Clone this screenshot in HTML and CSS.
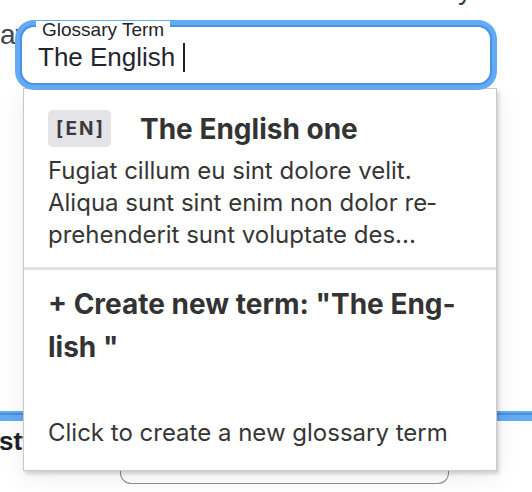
FILE: index.html
```html
<!DOCTYPE html>
<html lang="en">
<head>
<meta charset="utf-8">
<title>Glossary Term</title>
<link rel="stylesheet" href="styles.css">
</head>
<body>
<div class="page">
  <p class="bg-title">Glossary</p>
  <p class="bg-label">ay</p>
  <div class="bg-section"></div>
  <div class="bg-band"></div>
  <p class="bg-strong">stf</p>
  <div class="bg-box"></div>
</div>

<div class="combo">
  <div class="field"><span class="field-label">Glossary Term</span><span class="field-value">The English </span><span class="caret"></span></div>
  <div class="dropdown">
    <div class="option">
      <div class="option-head">
        <span class="badge">[EN]</span>
        <span class="option-title">The English one</span>
      </div>
      <p class="option-desc">Fugiat cillum eu sint dolore velit. Aliqua sunt sint enim non dolor re&shy;prehenderit sunt voluptate des...</p>
    </div>
    <div class="option option-create">
      <p class="create-title">+ Create new term: "The Eng&shy;lish "</p>
      <p class="create-hint">Click to create a new glossary term</p>
    </div>
  </div>
</div>
</body>
</html>
```
FILE: styles.css
```css
html, body {
  margin: 0;
  padding: 0;
  background: #ffffff;
  overflow: hidden;
}

body {
  width: 532px;
  height: 492px;
  position: relative;
  font-family: "Liberation Sans", Arial, sans-serif;
}

/* background page, mostly hidden under the popup */
.page {
  display: flex;
  flex-direction: column;
}

.bg-title {
  margin: -26px 0 0 0;
  padding-right: 60px;
  text-align: right;
  font-size: 28px;
  line-height: 32px;
  color: #3a3b44;
}

.bg-label {
  margin: 13px 0 0 0;
  font-size: 28px;
  line-height: 32px;
  color: #44464f;
}

.bg-section {
  height: 360px;
}

.bg-band {
  height: 2px;
  background: #4b8fdb;
  border-top: 2px solid #64aaf5;
  border-bottom: 6px solid #64aaf5;
}

.bg-strong {
  margin: 5px 0 0 -1px;
  font-size: 26px;
  line-height: 30px;
  font-weight: bold;
  color: #1d1f2b;
}

.bg-box {
  margin-left: 120px;
  width: 327px;
  height: 27px;
  border: 1.5px solid #8b8d97;
  border-top: none;
  border-radius: 0 0 11px 11px;
}

/* popup */
.combo {
  position: absolute;
  left: 20px;
  top: 25px;
  width: 472px;
}

.field {
  position: relative;
  box-sizing: border-box;
  height: 60px;
  padding: 15px 16px 0 16px;
  border: 2px solid #4a93e2;
  border-radius: 14px;
  box-shadow: 0 0 0 5px #63a9f4;
  background: #ffffff;
  font-size: 26px;
  line-height: 30px;
  color: #24262f;
}

.field-label {
  position: absolute;
  left: 14px;
  top: -6px;
  padding: 0 6px;
  background: #ffffff;
  font-size: 19px;
  line-height: 18px;
  color: #23252d;
}

.field-value {
  white-space: pre;
}

.caret {
  display: inline-block;
  width: 2px;
  height: 29px;
  background: #1f2029;
  vertical-align: -6px;
}

.dropdown {
  margin: 3px 0 0 3px;
  width: 474px;
  box-sizing: border-box;
  height: 383px;
  background: #ffffff;
  border: 1px solid #c8c8cd;
  box-shadow: 2px 3px 4px rgba(0, 0, 0, 0.16), 0 6px 24px rgba(0, 0, 0, 0.07);
  font-family: "Inter", "Noto Sans", sans-serif;
  color: #333333;
}

.option {
  padding: 21px 24px 16px 24px;
}

.option-head {
  display: flex;
  align-items: center;
  gap: 29px;
  height: 37px;
}

.badge {
  display: flex;
  align-items: center;
  justify-content: center;
  width: 63px;
  height: 37px;
  border-radius: 5px;
  background: #e4e4e6;
  font-size: 19px;
  font-weight: 700;
  letter-spacing: 2px;
  color: #393a3e;
  text-indent: 2px;
}

.option-title {
  font-size: 28px;
  font-weight: 700;
  line-height: 36px;
  color: #333333;
}

.option-desc {
  margin: 8px 0 0 0;
  font-size: 24px;
  line-height: 32px;
  color: #363636;
}

.option-create {
  border-top: 3px solid #e3e3e6;
  padding-top: 13px;
}

.create-title {
  margin: 0;
  font-size: 28px;
  font-weight: 700;
  line-height: 43px;
  color: #333333;
}

.create-hint {
  margin: 48px 0 0 0;
  font-size: 24px;
  line-height: 32px;
  color: #363636;
}
```
